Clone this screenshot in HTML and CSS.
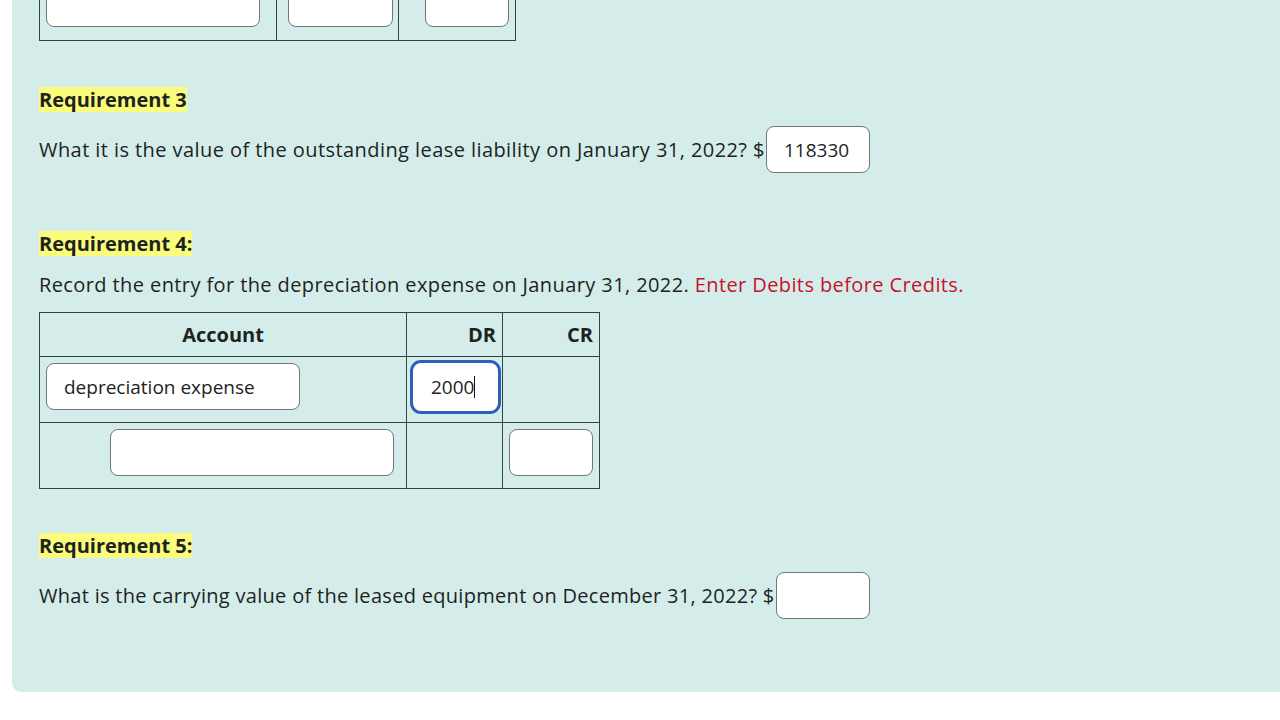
FILE: index.html
```html
<!DOCTYPE html>
<html lang="en">
  <head>
    <meta charset="UTF-8" />
    <meta name="viewport" content="width=device-width, initial-scale=1.0" />
    <title>Lease Requirements</title>
    <link rel="stylesheet" href="styles.css">
  </head>
  <body>
    <div class="panel">
      <table class="journal prev">
        <tr>
          <td class="acct"><input class="box wide" type="text" /></td>
          <td class="num"><input class="box mid" type="text" /></td>
          <td class="num last"><input class="box small" type="text" /></td>
        </tr>
      </table>

      <div class="req req3"><span class="tag">Requirement 3</span></div>
      <div class="question">
        What it is the value of the outstanding lease liability on January 31, 2022? $<input class="box answer" type="text" value="118330" />
      </div>

      <div class="req req4"><span class="tag">Requirement 4:</span></div>
      <p class="instr">
        Record the entry for the depreciation expense on January 31, 2022.
        <span class="warn">Enter Debits before Credits.</span>
      </p>
      <table class="journal entry">
        <tr class="head">
          <th class="acct-h">Account</th>
          <th class="dr">DR</th>
          <th class="cr">CR</th>
        </tr>
        <tr>
          <td><input class="box debit-acct" type="text" value="depreciation expense" /></td>
          <td><div class="box focus">2000<span class="caret"></span></div></td>
          <td></td>
        </tr>
        <tr>
          <td><input class="box credit-acct" type="text" /></td>
          <td></td>
          <td><input class="box amt" type="text" /></td>
        </tr>
      </table>

      <div class="req req5"><span class="tag">Requirement 5:</span></div>
      <div class="question q5">
        What is the carrying value of the leased equipment on December 31, 2022? $<input class="box answer short" type="text" />
      </div>
    </div>
  </body>
</html>
```

FILE: styles.css
```css
* {
  margin: 0;
  padding: 0;
  box-sizing: border-box;
}

body {
  background: #fff;
  font-family: "Open Sans", Lato, sans-serif;
  font-size: 20px;
  letter-spacing: 0.43px;
  color: #1c2421;
  overflow: hidden;
  height: 720px;
}

.panel {
  margin: -27px 0 0 12px;
  height: 719px;
  background: #d5edea;
  border-bottom-left-radius: 9px;
  padding: 0 27px;
}

.box {
  display: block;
  height: 47px;
  border: 1px solid #6f7877;
  border-radius: 8px;
  background: #fff;
  font-family: inherit;
  font-size: 19px;
  letter-spacing: 0;
  color: inherit;
  padding: 0 17px;
  outline: none;
}

/* journal tables */
.journal {
  border-collapse: collapse;
  table-layout: fixed;
}

.journal td,
.journal th {
  border: 1px solid #344240;
  vertical-align: top;
}

.prev td {
  height: 67px;
  padding-top: 6px;
}

.prev .acct {
  width: 237px;
  padding-left: 6px;
}

.prev .num {
  width: 122px;
  padding-left: 11px;
}

.prev .last {
  width: 117px;
  padding-left: 26px;
}

.wide { width: 214px; }
.mid { width: 105px; }
.small { width: 84px; }

/* requirement labels */
.req {
  height: 25px;
  line-height: 25px;
}

.tag {
  display: inline-block;
  background: #fbfb7c;
  font-weight: 700;
  letter-spacing: 0;
}

.req3 { margin-top: 46px; }
.req4 { margin-top: 58px; }
.req5 { margin-top: 44px; }

.question {
  display: flex;
  align-items: center;
  margin-top: 14px;
  white-space: nowrap;
}

.answer {
  width: 104px;
  margin-left: 1px;
}

.short { width: 94px; }

.q5 {
  margin-top: 14px;
  letter-spacing: 0.3px;
}

.instr {
  margin-top: 16px;
  line-height: 26px;
  letter-spacing: 0.4px;
}

.warn {
  color: #c8102e;
}

/* depreciation entry */
.entry {
  margin-top: 14px;
  width: 560px;
}

.entry th {
  height: 44px;
  vertical-align: middle;
  font-weight: 700;
  letter-spacing: 0;
  padding: 0 6px;
}

.entry .acct-h {
  width: 367px;
  text-align: center;
}

.entry .dr {
  width: 96px;
  text-align: right;
}

.entry .cr {
  width: 97px;
  text-align: right;
}

.entry td {
  height: 66px;
  padding: 6px;
}

.debit-acct { width: 254px; }

.credit-acct {
  width: 284px;
  margin-left: 64px;
}

.amt { width: 84px; }

.focus {
  width: 91px;
  height: 54px;
  margin: -3px 0 0 -3px;
  border: 3px solid #2c5fb5;
  border-radius: 11px;
  display: flex;
  align-items: center;
  padding: 0 0 0 18px;
}

.caret {
  display: inline-block;
  width: 1px;
  height: 22px;
  background: #111;
}
```
